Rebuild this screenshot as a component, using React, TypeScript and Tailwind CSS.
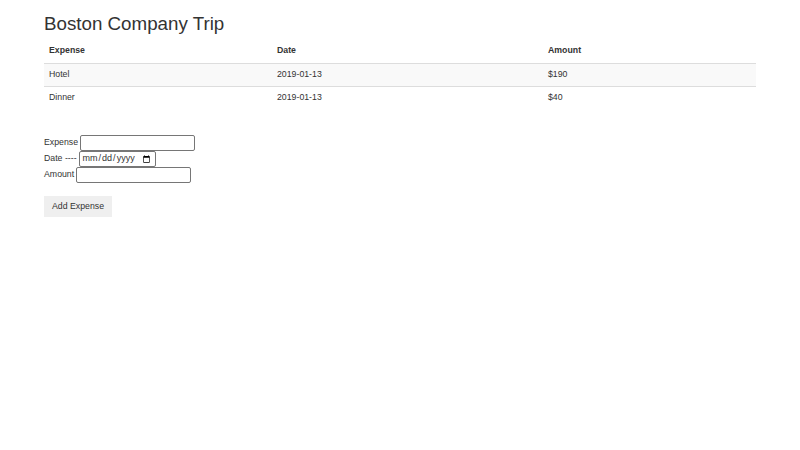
const rows = [
  { expense: "Hotel", date: "2019-01-13", amount: "$190" },
  { expense: "Dinner", date: "2019-01-13", amount: "$40" },
];

export default function App() {
  return (
    <div className="min-h-[450px] bg-white font-['Liberation_Sans',Arial,sans-serif] text-[8.75px] text-[#333]">
      <div className="mx-[44px] w-[712px]">
        <h2 className="pt-[13px] text-[18.75px] leading-[21px] font-normal text-[#333]">
          Boston Company Trip
        </h2>

        <table className="mt-[5px] w-full border-collapse">
          <thead>
            <tr className="h-[24px] border-b-[1.5px] border-[#ddd]">
              <th className="w-[228px] px-[5px] text-left font-bold">Expense</th>
              <th className="w-[271px] px-[5px] text-left font-bold">Date</th>
              <th className="px-[5px] text-left font-bold">Amount</th>
            </tr>
          </thead>
          <tbody>
            {rows.map((r, i) => (
              <tr
                key={r.expense}
                className={`h-[23px] border-t border-[#ddd] ${i % 2 === 0 ? "bg-[#f9f9f9]" : ""}`}
              >
                <td className="px-[5px]">{r.expense}</td>
                <td className="px-[5px]">{r.date}</td>
                <td className="px-[5px]">{r.amount}</td>
              </tr>
            ))}
          </tbody>
        </table>

        <form className="mt-[26px] flex flex-col">
          <div className="flex h-[16px] items-center">
            <label>Expense</label>
            <input className="ml-[2px] h-[16px] w-[115px] rounded-[2px] border border-[#767676] px-[2px] text-[9px]" />
          </div>
          <div className="flex h-[16px] items-center">
            <label>Date ----</label>
            <input
              type="date"
              className="ml-[2px] h-[16px] w-[77px] rounded-[2px] border border-[#767676] px-[2px] text-[9px]"
            />
          </div>
          <div className="flex h-[16px] items-center">
            <label>Amount</label>
            <input className="ml-[2px] h-[16px] w-[115px] rounded-[2px] border border-[#767676] px-[2px] text-[9px]" />
          </div>
          <div>
            <button
              type="button"
              className="mt-[13px] h-[21px] w-[68px] bg-[#efefef] text-center text-[#333]"
            >
              Add Expense
            </button>
          </div>
        </form>
      </div>
    </div>
  );
}
